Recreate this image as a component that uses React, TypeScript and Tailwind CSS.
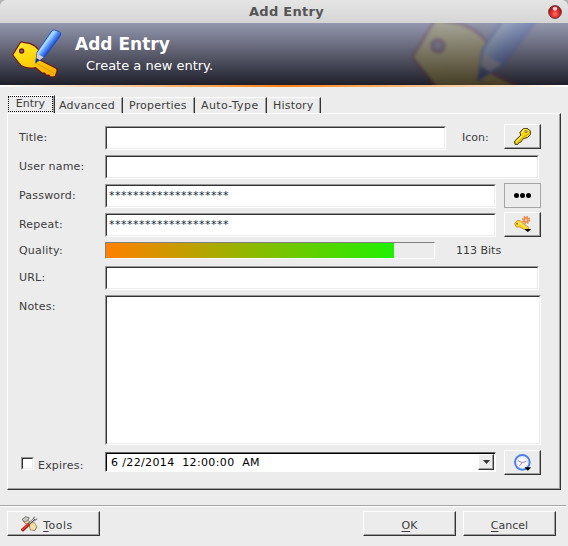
import type { ReactNode } from "react";
import clsx from "clsx";

const tabs = [
    { name: "Advanced", className: "w-[68px] pl-1" },
    { name: "Properties", className: "w-[72px] pl-1.5" },
    { name: "Auto-Type", className: "w-[72px] pl-1.5 tracking-[0.4px]" },
    { name: "History", className: "w-[54px] pl-1.5" },
];

function KeyPencilIcon({ className, id }: { className?: string; id: string }) {
    return (
        <svg viewBox="36 87 147 147" className={className}>
            <defs>
                <linearGradient id={`${id}-gold`} x1="0" y1="0" x2="0.7" y2="1">
                    <stop offset="0" stopColor="#ffe840" />
                    <stop offset="0.4" stopColor="#ffdc10" />
                    <stop offset="1" stopColor="#f8b000" />
                </linearGradient>
                <linearGradient id={`${id}-blue`} gradientUnits="userSpaceOnUse" x1="128" y1="118" x2="158" y2="141">
                    <stop offset="0" stopColor="#4a88f4" />
                    <stop offset="0.35" stopColor="#b0dcff" />
                    <stop offset="0.65" stopColor="#4f90fa" />
                    <stop offset="1" stopColor="#1440c8" />
                </linearGradient>
            </defs>
            <path
                d="M38 165 L60 129 Q63 124 70 127 L88 130 Q108 137 117 151 L121 181 L167 204 Q172 207 171 214 L165 230 L151 231 L147 225 L140 226 L133 219 L126 219 L107 203 Q88 207 73 201 Q62 198 57 189 Z"
                fill={`url(#${id}-gold)`}
                stroke="#701414"
                strokeWidth="3.5"
                strokeLinejoin="round"
            />
            <path d="M104 187 L162 220" stroke="#d08a00" strokeWidth="2" />
            <circle cx="65" cy="153" r="6" fill="#777080" stroke="#701414" strokeWidth="4" />
            <path
                d="M107 188 L111 157 L155 93 Q158 89 163 90 L178 95 Q183 98 182 104 L178 112 L132 173 Z"
                fill={`url(#${id}-blue)`}
                stroke="#1c48b8"
                strokeWidth="2.5"
                strokeLinejoin="round"
            />
            <path d="M107 188 L112 158 L119 166 L124 168 L131 172 Z" fill="#d6d0cc" />
            <path d="M107 188 L109 174 L119 180 Z" fill="#102b78" />
        </svg>
    );
}

function KeyIcon() {
    return (
        <svg viewBox="341 38 51 51" className="h-[17px] w-[17px]">
            <path
                d="M359 51 L369 40 L383 40 L390 47 L390 58 L381 67 L371 69 L364 76 L362 80 L357 81 L353 87 L344 87 L343 77 L361 60 Z"
                fill="#f7d516"
                stroke="#3d3515"
                strokeWidth="3"
            />
            <path d="M363 54 L371 44 L378 43 M348 78 L365 62" fill="none" stroke="#fff67a" strokeWidth="3" />
            <path d="M351 83 L371 64 L385 56" fill="none" stroke="#d8a010" strokeWidth="3" />
            <circle cx="377" cy="49" r="3" fill="#eee" stroke="#655a25" strokeWidth="2.5" />
        </svg>
    );
}

function GenerateIcon() {
    return (
        <svg viewBox="341 303 51 51" className="h-[17px] w-[17px]">
            <path
                d="M343 326 L350 317 L360 317 L369 326 L385 337 L382 347 L371 343 L358 336 L348 336 Z"
                fill="#f9d62d"
                stroke="#c58c24"
                strokeWidth="2.5"
            />
            <path d="M352 322 L359 324 L377 338" fill="none" stroke="#fff58a" strokeWidth="2.5" />
            <circle cx="350" cy="326" r="2.5" fill="#906020" />
            <circle cx="377" cy="315" r="10" fill="#f5b184" stroke="#e58a55" strokeWidth="5" strokeDasharray="4.5 3.35" />
            <circle cx="377" cy="315" r="6" fill="#f7c49d" stroke="#e27b3d" strokeWidth="3" />
            <path d="M374 342 H391 V344 L382.5 351 L374 344 Z" fill="#000" />
        </svg>
    );
}

function ClockIcon() {
    return (
        <svg viewBox="521 71 51 51" className="h-[17px] w-[17px]">
            <circle cx="546" cy="96" r="22" fill="#f5f5ff" stroke="#4b80e6" strokeWidth="6" />
            <circle cx="546" cy="96" r="16" fill="none" stroke="#b5bed2" strokeWidth="3" strokeDasharray="2 6.38" />
            <path d="M533 91 L546 97 L558 93" fill="none" stroke="#74788a" strokeWidth="2.5" />
            <path d="M546 96 L537 107" stroke="#ef7270" strokeWidth="3" />
            <path d="M554 111 H571 V113 L562.5 121 L554 113 Z" fill="#000" />
        </svg>
    );
}

function ToolsIcon() {
    return (
        <svg viewBox="62 254 51 49" className="h-[16px] w-[17px] shrink-0">
            <path d="M66 264 L76 257 L86 260 L82 267 L110 288 L102 299 L71 273 Z" fill="#ead49a" stroke="#77683f" strokeWidth="2.5" />
            <path d="M65 264 L76 256 L87 260 L80 269 L72 272 Z" fill="#c6c6c6" stroke="#666" strokeWidth="2" />
            <path d="M85 274 L103 275 L110 286 L104 298 L90 297 Z" fill="#f3dfa5" stroke="#826e42" strokeWidth="2" />
            <path d="M81 283 L104 262" stroke="#555" strokeWidth="7" />
            <path d="M82 281 L104 261" stroke="#ddd" strokeWidth="3" />
            <path d="M99 262 L103 256 M104 268 L111 262" stroke="#555" strokeWidth="3" />
            <path d="M67 296 L83 281" stroke="#8f1717" strokeWidth="10" strokeLinecap="round" />
            <path d="M67 295 L82 280" stroke="#ed3c35" strokeWidth="6" strokeLinecap="round" />
        </svg>
    );
}

function Button({ children, className }: { children: ReactNode; className?: string }) {
    return (
        <button
            className={clsx(
                "flex h-[25px] shrink-0 items-center justify-center border border-t-white border-r-[#333] border-b-[#333] border-l-white shadow-[inset_-1px_-1px_0_#a0a0a0]",
                className,
            )}
        >
            {children}
        </button>
    );
}

function Field({ children, className }: { children?: ReactNode; className?: string }) {
    return (
        <div className={clsx("mt-0.5 shrink-0 border border-t-[#969696] border-r-white border-b-white border-l-[#969696] bg-white", className)}>
            <div className="h-full border border-t-[#333] border-r-[#ececec] border-b-[#ececec] border-l-[#333]">{children}</div>
        </div>
    );
}

function Row({ label, children, className, labelClass }: { label: string; children: ReactNode; className?: string; labelClass?: string }) {
    return (
        <div className={clsx("flex items-start", className ?? "h-[29px]")}>
            <div className={clsx("w-[86px] shrink-0 leading-[13px]", labelClass ?? "mt-[7px]")}>{label}</div>
            {children}
        </div>
    );
}

export default function App() {
    return (
        <div className="h-[546px] w-[568px] overflow-hidden bg-[#b4b4b4] font-['DejaVu_Sans',sans-serif] text-[11px] text-[#3c3c3c]">
            <div className="flex h-full flex-col rounded-t-[7px] bg-[#ececec]">
                <div className="relative h-[23px] shrink-0 rounded-t-[7px] bg-linear-to-b/srgb from-[#e5e5e5] to-[#d5d5d5] pl-[5px] text-center text-[13px] leading-[23px] font-bold tracking-[0.3px] text-[#555]">
                    Add Entry
                    <svg viewBox="0 0 14 14" className="absolute top-[5px] right-[6px] h-3.5 w-3.5">
                        <defs>
                            <radialGradient id="close" cx="0.5" cy="0.65">
                                <stop offset="0" stopColor="#ff7666" />
                                <stop offset="0.55" stopColor="#e43030" />
                                <stop offset="1" stopColor="#b51c1c" />
                            </radialGradient>
                        </defs>
                        <circle cx="7" cy="7" r="6.4" fill="url(#close)" stroke="#651c1c" strokeWidth="0.8" />
                        <ellipse cx="7" cy="3.7" rx="2.3" ry="2" fill="#fff" opacity="0.8" />
                    </svg>
                </div>

                <header className="relative h-[62px] shrink-0 overflow-hidden bg-linear-to-b/srgb from-[#9498ae] to-[#20202b]">
                    <KeyPencilIcon id="mark" className="absolute top-[-41px] left-[410px] h-[142px] w-[142px] opacity-[0.17] blur-[1.5px]" />
                    <div className="flex pt-[6px] pl-[12px] text-white">
                        <KeyPencilIcon id="key" className="h-[49px] w-[49px]" />
                        <div className="pt-[5px] pl-[14px]">
                            <h1 className="text-[17px] leading-5 font-bold">Add Entry</h1>
                            <p className="mt-[4px] pl-[11px] text-[13px] leading-4">Create a new entry.</p>
                        </div>
                    </div>
                </header>
                <div className="h-0.5 shrink-0 bg-linear-to-r/srgb from-white via-[#ff8010] to-white" />

                <div className="mt-2 flex h-[18px] shrink-0 items-end pl-[8px] tracking-[0.2px]">
                    <div className="flex h-[18px] w-[47px] rounded-tl-[2px] border-t border-r border-t-white border-r-[#333] shadow-[inset_-1px_0_0_#a0a0a0]">
                        <div className="h-[16px] w-[45px] border border-dotted border-black text-center leading-[13px] tracking-normal">Entry</div>
                    </div>
                    {tabs.map((tab) => (
                        <div
                            key={tab.name}
                            className={clsx(
                                "h-4 rounded-tl-[2px] border-t border-r border-t-white border-r-[#333] leading-[15px] shadow-[inset_-1px_0_0_#a0a0a0]",
                                tab.className,
                            )}
                        >
                            {tab.name}
                        </div>
                    ))}
                </div>

                <main className="ml-[7px] h-[377px] w-[554px] shrink-0 border border-t-white border-r-[#333] border-b-[#333] border-l-white pt-[10px] pl-[11px] tracking-[0.2px] shadow-[inset_-1px_-1px_0_#a0a0a0]">
                    <Row label="Title:">
                        <Field className="h-6 w-[341px]" />
                        <div className="mt-[7px] ml-4 w-[42px] leading-[13px] tracking-normal">Icon:</div>
                        <Button className="w-[37px]"><KeyIcon /></Button>
                    </Row>
                    <Row label="User name:">
                        <Field className="h-6 w-[434px]" />
                    </Row>
                    <Row label="Password:">
                        <Field className="h-6 w-[391px]">
                            <span className="block pt-[3px] pl-[2px] leading-[13px] text-[#102838] tracking-[0.5px]">********************</span>
                        </Field>
                        <div className="mt-px ml-2 flex h-[25px] w-[37px] items-center justify-center gap-px border border-[#a5a5a5]">
                            {[0, 1, 2].map((i) => (
                                <span key={i} className="size-[5px] rounded-full bg-black" />
                            ))}
                        </div>
                    </Row>
                    <Row label="Repeat:">
                        <Field className="h-6 w-[391px]">
                            <span className="block pt-[3px] pl-[2px] leading-[13px] text-[#102838] tracking-[0.5px]">********************</span>
                        </Field>
                        <Button className="mt-px ml-2 w-[37px]"><GenerateIcon /></Button>
                    </Row>
                    <Row label="Quality:" className="h-6" labelClass="mt-1">
                        <div className="mt-0.5 h-[17px] w-[330px] border border-t-[#808080] border-r-white border-b-white border-l-[#808080]">
                            <div className="h-full w-[288px] bg-linear-to-r/srgb from-[#ff8000] to-[#20f000]" />
                        </div>
                        <div className="mt-1 ml-[21px] leading-[13px] tracking-normal">113 Bits</div>
                    </Row>
                    <Row label="URL:">
                        <Field className="h-6 w-[434px]" />
                    </Row>
                    <Row label="Notes:" className="h-[157px]">
                        <Field className="h-[150px] w-[436px]" />
                    </Row>
                    <div className="flex items-start">
                        <div className="mt-[7px] ml-[2px] size-[13px] border border-t-[#969696] border-r-white border-b-white border-l-[#969696] bg-white">
                            <div className="h-full border border-t-[#333] border-r-[#ececec] border-b-[#ececec] border-l-[#333]" />
                        </div>
                        <div className="mt-[9px] ml-1 w-[67px] leading-[13px]">Expires:</div>
                        <div className="mt-0.5 flex h-5 w-[391px] border border-t-[#666] border-r-white border-b-white border-l-[#808080] bg-white">
                            <div className="flex w-full justify-between border-t border-l border-black">
                                <span className="pt-[2px] pl-1 leading-[13px] tracking-[0.36px] whitespace-pre text-black">6 /22/2014  12:00:00  AM</span>
                                <div className="mr-px flex h-4 w-4 items-center justify-center border border-t-white border-r-[#333] border-b-[#333] border-l-white bg-[#ececec] shadow-[inset_-1px_-1px_0_#a0a0a0]">
                                    <svg viewBox="0 0 7 4" className="h-1 w-[7px]"><path d="M0 0H7L3.5 4Z" fill="#333" /></svg>
                                </div>
                            </div>
                        </div>
                        <Button className="ml-2 w-[37px]"><ClockIcon /></Button>
                    </div>
                </main>

                <footer className="mt-[15px] flex h-[41px] w-[566px] shrink-0 border-t border-[#a5a5a5] pt-[5px] pl-[7px] shadow-[inset_0_1px_0_white]">
                    <Button className="w-[93px] gap-[5px] pr-[13px]">
                        <ToolsIcon />
                        <span className="pt-[5px] tracking-[0.5px]"><u className="underline-offset-2">T</u>ools</span>
                    </Button>
                    <Button className="ml-[263px] w-[93px]"><span className="pt-[5px]"><u className="underline-offset-2">O</u>K</span></Button>
                    <Button className="ml-[7px] w-[93px]"><span className="pt-[5px]"><u className="underline-offset-2">C</u>ancel</span></Button>
                </footer>
            </div>
        </div>
    );
}
